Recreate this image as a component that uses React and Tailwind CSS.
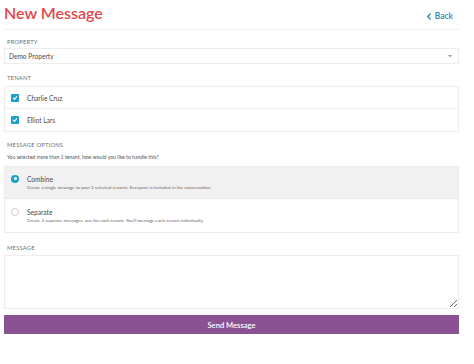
import React from "react";

const tenants = ["Charlie Cruz", "Elliot Lars"];

const options = [
	{
		name: "Combine",
		desc: "Create a single message to your 2 selected tenants. Everyone is included in the conversation.",
		selected: true,
	},
	{
		name: "Separate",
		desc: "Create 2 separate messages, one for each tenant. You'll message each tenant individually.",
		selected: false,
	},
];

const Label = ({ children, className = "" }) => (
	<div
		className={`text-[5.8px] leading-[6px] uppercase tracking-[0.2px] text-[#6f6f6f] pl-[3px] ${className}`}
	>
		{children}
	</div>
);

const Check = () => (
	<span className="flex items-center justify-center w-[8px] h-[8px] bg-[#1d9fca] rounded-[1px]">
		<svg width="6" height="6" viewBox="0 0 10 10">
			<path
				d="M2.2 5.3 L4.2 7.2 L7.8 2.8"
				fill="none"
				stroke="#fff"
				strokeWidth="1.8"
				strokeLinecap="round"
				strokeLinejoin="round"
			/>
		</svg>
	</span>
);

const Radio = ({ on }) =>
	on ? (
		<span className="flex items-center justify-center w-[8px] h-[8px] rounded-full bg-[#1d9fca]">
			<span className="w-[3px] h-[3px] rounded-full bg-white" />
		</span>
	) : (
		<span className="w-[8px] h-[8px] rounded-full border border-[#cfcfcf] bg-white" />
	);

export default function App() {
	return (
		<div className="w-[474px] h-[364px] bg-white font-['Lato','Liberation_Sans',sans-serif] overflow-hidden">
			<div className="ml-[4px] w-[455px]">
				{/* header */}
				<div className="flex justify-between h-[30px] border-b border-[#f0f0f0]">
					<h1 className="pt-[3px] text-[16px] leading-[20px] font-semibold text-[#e2464b]">
						New Message
					</h1>
					<div className="flex items-center gap-[3px] pt-[12px] pr-[6px] h-[20px] text-[#2b86ad] text-[8.5px] leading-[8px] font-semibold">
						<svg width="6" height="7" viewBox="0 0 6 8">
							<path
								d="M4.3 1 L1.6 4 L4.3 7"
								fill="none"
								stroke="#2b86ad"
								strokeWidth="1.6"
								strokeLinecap="round"
								strokeLinejoin="round"
							/>
						</svg>
						<span>Back</span>
					</div>
				</div>

				{/* property */}
				<Label className="pt-[9px] pb-[3px]">Property</Label>
				<div className="flex items-center justify-between h-[16px] border border-[#ededed] shadow-[0_0_1px_rgba(0,0,0,0.06)] pl-[4px] pr-[6px]">
					<span className="text-[6.6px] leading-[8px] text-[#4a4a4a]">
						Demo Property
					</span>
					<svg width="4" height="3" viewBox="0 0 4 3">
						<path d="M0 0 L4 0 L2 2.5 Z" fill="#9a9a9a" />
					</svg>
				</div>

				{/* tenant */}
				<Label className="pt-[11px] pb-[5px]">Tenant</Label>
				<div className="border border-[#ededed] shadow-[0_0_1px_rgba(0,0,0,0.06)]">
					{tenants.map((t, i) => (
						<div
							key={t}
							className={`flex items-center gap-[8px] h-[22px] pl-[6px] ${
								i === 0 ? "border-b border-[#f0f0f0]" : ""
							}`}
						>
							<Check />
							<span className="text-[6.6px] leading-[8px] text-[#4a4a4a]">
								{t}
							</span>
						</div>
					))}
				</div>

				{/* options */}
				<Label className="pt-[10px]">Message Options</Label>
				<div className="pt-[6px] pb-[6px] pl-[3px] text-[5.1px] leading-[6px] text-[#555]">
					You selected more than 1 tenant, how would you like to handle this?
				</div>
				<div className="border border-[#ededed] shadow-[0_0_1px_rgba(0,0,0,0.06)]">
					{options.map((o) => (
						<div
							key={o.name}
							className={`flex flex-col justify-center pl-[6px] ${
								o.selected
									? "h-[32px] bg-[#f1f1f1] border-b border-[#e8e8e8]"
									: "h-[33px] bg-white"
							}`}
						>
							<div className="flex items-center gap-[8px]">
								<Radio on={o.selected} />
								<span className="text-[6.6px] leading-[8px] text-[#4a4a4a]">
									{o.name}
								</span>
							</div>
							<div className="mt-[2px] pl-[16px] text-[4.55px] leading-[6px] text-[#666]">
								{o.desc}
							</div>
						</div>
					))}
				</div>

				{/* message */}
				<Label className="pt-[12px] pb-[4px]">Message</Label>
				<textarea className="block w-full h-[54px] border border-[#ededed] shadow-[0_0_1px_rgba(0,0,0,0.06)] outline-none" />
				<button className="mt-[6px] w-full h-[19px] bg-[#8a5193] text-white text-[7.6px] leading-[8px] font-semibold">
					Send Message
				</button>
			</div>
		</div>
	);
}
